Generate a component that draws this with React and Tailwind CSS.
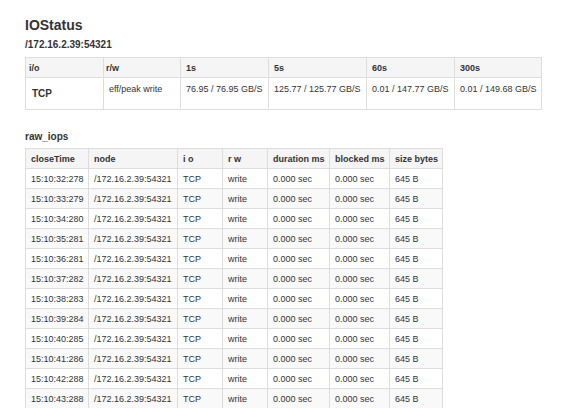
const font = { fontFamily: '"Liberation Sans", Arial, Helvetica, sans-serif' };

const rates = [
  ["1s", "76.95 / 76.95 GB/S"],
  ["5s", "125.77 / 125.77 GB/S"],
  ["60s", "0.01 / 147.77 GB/S"],
  ["300s", "0.01 / 149.68 GB/S"],
];

const times = [
  "15:10:32:278",
  "15:10:33:279",
  "15:10:34:280",
  "15:10:35:281",
  "15:10:36:281",
  "15:10:37:282",
  "15:10:38:283",
  "15:10:39:284",
  "15:10:40:285",
  "15:10:41:286",
  "15:10:42:288",
  "15:10:43:288",
];

const App = () => {
  return (
    <div className="h-[408px] overflow-hidden bg-white text-[#333]" style={font}>
      <div className="flex flex-col items-start pl-[25px] pt-[17px]">
        <h3 className="text-[14px] leading-[16px] font-bold">IOStatus</h3>
        <h5 className="mt-[6px] text-[10px] leading-[12px] font-bold">/172.16.2.39:54321</h5>

        {/* summary */}
        <table className="mt-[6px] w-[516px] table-fixed border-collapse text-[9px] leading-[10px]">
          <colgroup>
            <col className="w-[78px]" />
            <col className="w-[77px]" />
            <col className="w-[88px]" />
            <col className="w-[98px]" />
            <col className="w-[88px]" />
            <col className="w-[87px]" />
          </colgroup>
          <thead>
            <tr className="h-[20px] bg-[#f5f5f5]">
              <th className="border border-[#ddd] pl-[3px] text-left font-bold">i/o</th>
              <th className="border border-[#ddd] pl-[2px] text-left font-bold">r/w</th>
              {rates.map(([k]) => (
                <th key={k} className="border border-[#ddd] px-[5px] text-left font-bold">
                  {k}
                </th>
              ))}
            </tr>
          </thead>
          <tbody>
            <tr className="h-[32px]">
              <td className="border border-[#ddd] pl-[6px] align-middle text-[10px] font-bold">TCP</td>
              <td className="border border-[#ddd] px-[5px] pt-[6px] align-top whitespace-nowrap">eff/peak write</td>
              {rates.map(([k, v]) => (
                <td key={k} className="border border-[#ddd] px-[5px] pt-[6px] align-top whitespace-nowrap">
                  {v}
                </td>
              ))}
            </tr>
          </tbody>
        </table>

        <h5 className="mt-[21px] text-[10px] leading-[12px] font-bold">raw_iops</h5>

        <table className="mt-[5px] w-[417px] table-fixed border-collapse text-[9px] leading-[10px] text-[#333]">
          <colgroup>
            <col className="w-[63px]" />
            <col className="w-[89px]" />
            <col className="w-[45px]" />
            <col className="w-[45px]" />
            <col className="w-[62px]" />
            <col className="w-[60px]" />
            <col className="w-[53px]" />
          </colgroup>
          <thead>
            <tr className="h-[20px] bg-[#f5f5f5]">
              {["closeTime", "node", "i o", "r w", "duration ms", "blocked ms", "size bytes"].map((h) => (
                <th key={h} className="border border-[#ddd] px-[5px] text-left font-bold whitespace-nowrap">
                  {h}
                </th>
              ))}
            </tr>
          </thead>
          <tbody>
            {times.map((t, i) => (
              <tr key={t} className={`h-[20px] ${i % 2 === 1 ? "bg-[#f9f9f9]" : "bg-white"}`}>
                <td className="border border-[#ddd] px-[5px] whitespace-nowrap">{t}</td>
                <td className="border border-[#ddd] px-[5px] whitespace-nowrap">/172.16.2.39:54321</td>
                <td className="border border-[#ddd] px-[5px] text-[#333]">TCP</td>
                <td className="border border-[#ddd] px-[5px]">write</td>
                <td className="border border-[#ddd] px-[5px] whitespace-nowrap">0.000 sec</td>
                <td className="border border-[#ddd] px-[5px] whitespace-nowrap">0.000 sec</td>
                <td className="border border-[#ddd] px-[5px] whitespace-nowrap">645 B</td>
              </tr>
            ))}
            {/* next row, only its top shows */}
            <tr className="h-[20px] bg-white">
              <td className="border border-[#ddd]" />
              <td className="border border-[#ddd]" />
              <td className="border border-[#ddd]" />
              <td className="border border-[#ddd]" />
              <td className="border border-[#ddd]" />
              <td className="border border-[#ddd]" />
              <td className="border border-[#ddd]" />
            </tr>
          </tbody>
        </table>
      </div>
    </div>
  );
};

export default App;
